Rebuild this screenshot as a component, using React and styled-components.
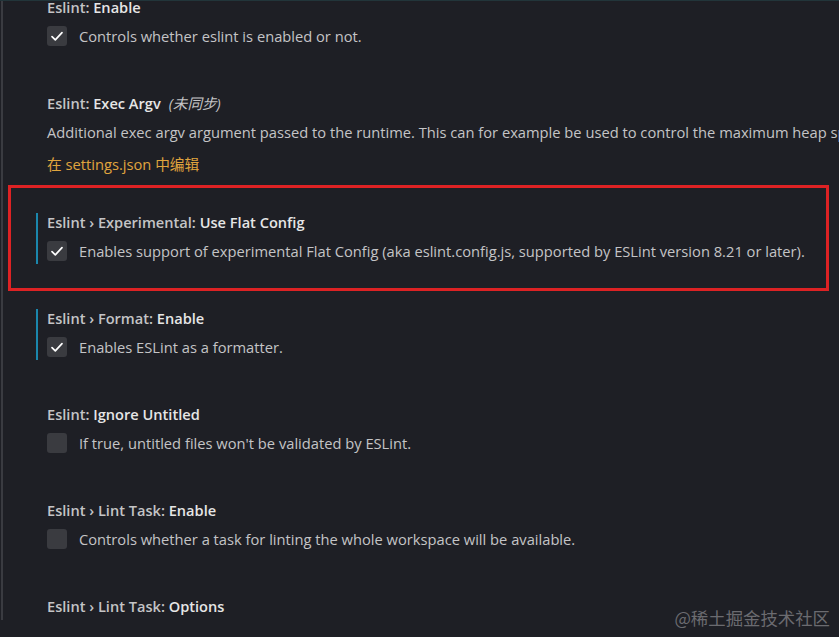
import React from "react";
import styled, { createGlobalStyle } from "styled-components";

const Global = createGlobalStyle`
  html, body { margin: 0; padding: 0; background: #1e1f25; }
  body {
    width: 839px; height: 637px; overflow: hidden;
    font-family: "Open Sans", "Noto Sans", "Noto Sans CJK SC", sans-serif;
  }
`;

const Page = styled.div`
  position: relative;
  width: 839px;
  height: 637px;
  background: #1e1f25;
  border-top: 1px solid #22353a;
  box-sizing: border-box;
  overflow: hidden;
`;

const Panel = styled.div`
  margin-left: 1px;
  height: 619px;
  border-left: 2px solid #3a3b41;
  overflow: hidden;
`;

const List = styled.div`
  display: flex;
  flex-direction: column;
  margin-top: -17px; /* scroll offset */
  padding-left: 44px;
`;

const Item = styled.div`
  padding-top: 12px;
  padding-bottom: ${(p) => p.$pb ?? 33}px;
`;

const Body = styled.div`
  position: relative;
  display: flex;
  flex-direction: column;
  gap: 7px;
  &::before {
    content: "";
    display: ${(p) => (p.$modified ? "block" : "none")};
    position: absolute;
    left: -11px;
    top: 2px;
    bottom: -2px;
    width: 2px;
    background: #1b87ad;
  }
`;

const Title = styled.div`
  height: 22px;
  line-height: 22px;
  font-size: 14.6px;
  font-weight: 600;
  color: #e6e6e6;
  white-space: nowrap;
`;

const Category = styled.span`
  color: #c4c4c6;
`;

const Sync = styled.span`
  margin-left: 8px;
  font-weight: 400;
  font-style: italic;
  color: #c4c4c6;
`;

const Row = styled.div`
  display: flex;
  align-items: center;
  gap: 12px;
  height: 22px;
`;

const Box = styled.div`
  flex: none;
  width: 20px;
  height: 20px;
  border-radius: 3px;
  background: #3a3b40;
  display: flex;
  align-items: center;
  justify-content: center;
`;

const Desc = styled.div`
  font-size: 14.7px;
  line-height: 22px;
  color: #c4c4c6;
  white-space: nowrap;
`;

const Link = styled.div`
  margin-top: 3px;
  font-size: 14.7px;
  line-height: 22px;
  color: #e0a53e;
  white-space: nowrap;
`;

const Highlight = styled.div`
  position: absolute;
  left: 8px;
  top: 184px;
  width: 821px;
  height: 106px;
  box-sizing: border-box;
  border: 3px solid #dd2224;
  pointer-events: none;
`;

const Watermark = styled.div`
  position: absolute;
  right: 9px;
  bottom: 7px;
  font-size: 17.4px;
  color: #6b6b70;
  font-family: "Noto Sans CJK SC", "Noto Sans", sans-serif;
`;

const Check = () => (
  <svg width="16" height="16" viewBox="0 0 16 16" fill="none">
    <path d="M3 8.6 L6.3 11.8 L13 4.6" stroke="#ffffff" strokeWidth="1.7" strokeLinecap="round" strokeLinejoin="round" />
  </svg>
);

const Checkbox = ({ checked }) => <Box>{checked && <Check />}</Box>;

const settings = [
  { cat: "Eslint: ", label: "Enable", checked: true, desc: "Controls whether eslint is enabled or not." },
  {
    cat: "Eslint: ",
    label: "Exec Argv",
    sync: "(未同步)",
    text: "Additional exec argv argument passed to the runtime. This can for example be used to control the maximum heap space that the eslint server can use.",
    link: "在 settings.json 中编辑",
    pb: 24,
  },
  {
    cat: "Eslint › Experimental: ",
    label: "Use Flat Config",
    checked: true,
    modified: true,
    desc: "Enables support of experimental Flat Config (aka eslint.config.js, supported by ESLint version 8.21 or later).",
  },
  { cat: "Eslint › Format: ", label: "Enable", checked: true, modified: true, desc: "Enables ESLint as a formatter." },
  { cat: "Eslint: ", label: "Ignore Untitled", checked: false, desc: "If true, untitled files won't be validated by ESLint." },
  {
    cat: "Eslint › Lint Task: ",
    label: "Enable",
    checked: false,
    desc: "Controls whether a task for linting the whole workspace will be available.",
  },
  { cat: "Eslint › Lint Task: ", label: "Options", text: "Command line options applied when running the task for linting the whole workspace." },
];

export default function App() {
  return (
    <>
      <Global />
      <Page>
        <Panel>
          <List>
            {settings.map((s, i) => (
              <Item key={i} $pb={s.pb}>
                <Body $modified={s.modified}>
                  <Title>
                    <Category>{s.cat}</Category>
                    {s.label}
                    {s.sync && <Sync>{s.sync}</Sync>}
                  </Title>
                  {s.desc !== undefined && (
                    <Row>
                      <Checkbox checked={s.checked} />
                      <Desc>{s.desc}</Desc>
                    </Row>
                  )}
                  {s.text && <Desc>{s.text}</Desc>}
                  {s.link && <Link>{s.link}</Link>}
                </Body>
              </Item>
            ))}
          </List>
        </Panel>
        <Highlight />
        <Watermark>@稀土掘金技术社区</Watermark>
      </Page>
    </>
  );
}
